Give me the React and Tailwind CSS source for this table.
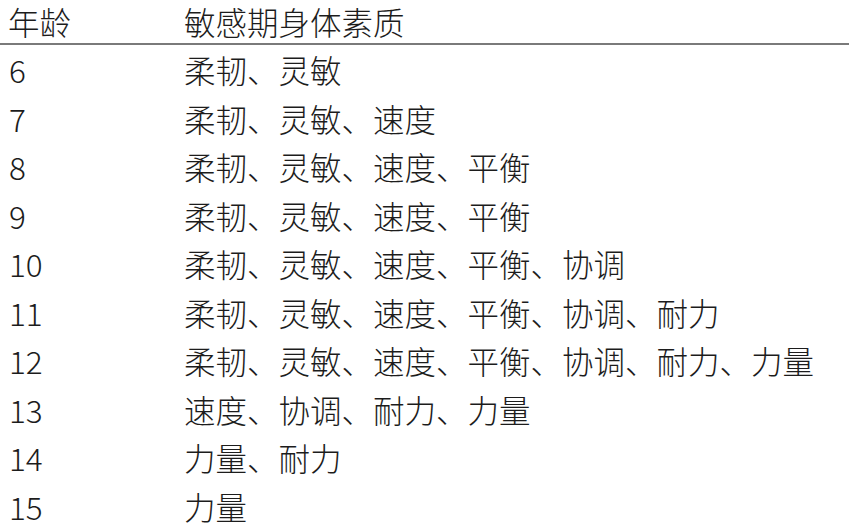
import React from "react";

const rows = [
  ["6", "柔韧、灵敏"],
  ["7", "柔韧、灵敏、速度"],
  ["8", "柔韧、灵敏、速度、平衡"],
  ["9", "柔韧、灵敏、速度、平衡"],
  ["10", "柔韧、灵敏、速度、平衡、协调"],
  ["11", "柔韧、灵敏、速度、平衡、协调、耐力"],
  ["12", "柔韧、灵敏、速度、平衡、协调、耐力、力量"],
  ["13", "速度、协调、耐力、力量"],
  ["14", "力量、耐力"],
  ["15", "力量"],
];

export default function App() {
  return (
    <div
      className="w-[849px] h-[531px] bg-white text-[#1c1c1c] text-[31.5px] font-light"
      style={{ fontFamily: '"Noto Sans CJK SC", "Noto Sans", sans-serif' }}
    >
      <div className="flex pt-[1px] pb-[2px] border-b-2 border-[#7a7a7a] leading-[40px]">
        <div className="w-[184px] pl-[8px]">年龄</div>
        <div>敏感期身体素质</div>
      </div>
      <div className="flex flex-col">
        {rows.map(([age, q]) => (
          <div key={age} className="flex h-[48.5px] items-center leading-[40px]">
            <div className="w-[184px] pl-[9px]">{age}</div>
            <div>{q}</div>
          </div>
        ))}
      </div>
    </div>
  );
}
